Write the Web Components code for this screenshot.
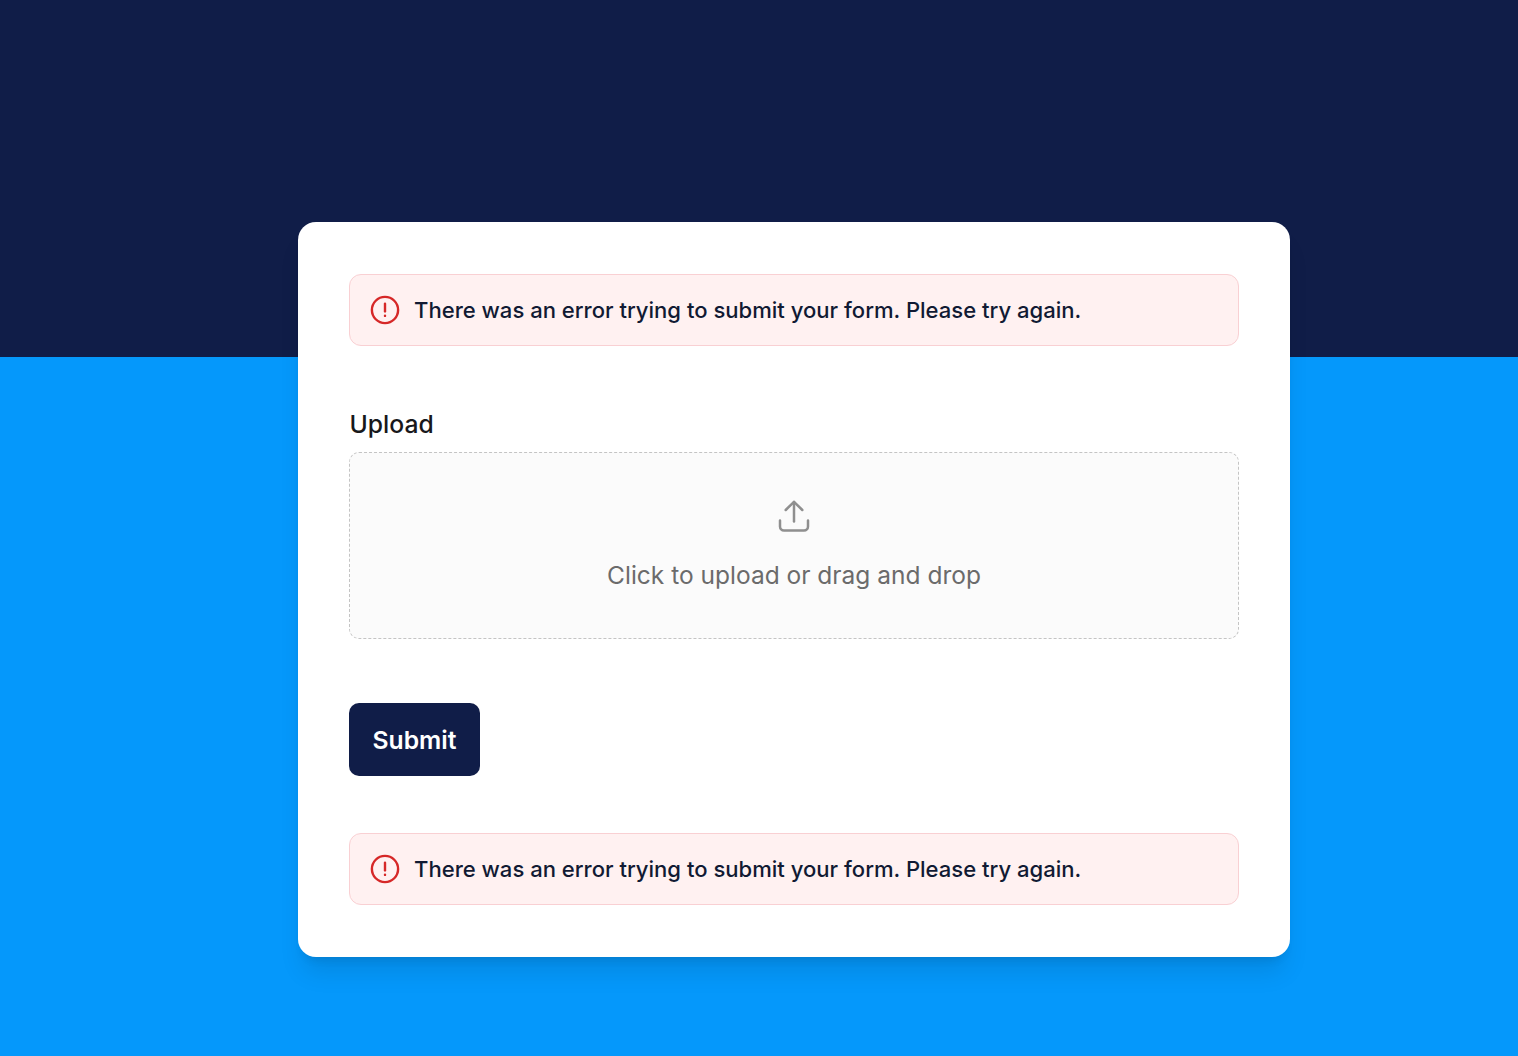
<!DOCTYPE html>
<html>
<head>
<meta charset="utf-8">
<title>Upload form</title>
<style>
    html, body {
        margin: 0;
        padding: 0;
    }
    body {
        font-family: Inter, "Liberation Sans", sans-serif;
    }
</style>
</head>
<body>

<upload-page>
    <form-card>
        <error-alert>There was an error trying to submit your form. Please try again.</error-alert>
        <file-drop label="Upload">Click to upload or drag and drop</file-drop>
        <submit-button>Submit</submit-button>
        <error-alert>There was an error trying to submit your form. Please try again.</error-alert>
    </form-card>
</upload-page>

<script>
class UploadPage extends HTMLElement {
    constructor() {
        super();
        this.attachShadow({mode: 'open'}).innerHTML = `
<style>
    :host {
        display: flex;
        justify-content: center;
        align-items: flex-start;
        box-sizing: border-box;
        height: 1056px;
        padding: 222px 228px 0 298px;
        background: linear-gradient(#101d48 357px, #0598fb 357px);
    }
</style>
<slot></slot>`;
    }
}

class FormCard extends HTMLElement {
    constructor() {
        super();
        this.attachShadow({mode: 'open'}).innerHTML = `
<style>
    :host {
        display: flex;
        flex-direction: column;
        box-sizing: border-box;
        width: 992px;
        height: 735px;
        padding: 52px 51px;
        background: #fff;
        border-radius: 18px;
        box-shadow: 0 20px 25px -5px rgb(0 0 0 / 0.1), 0 8px 10px -6px rgb(0 0 0 / 0.1);
    }
</style>
<slot></slot>`;
    }
}

class ErrorAlert extends HTMLElement {
    constructor() {
        super();
        this.attachShadow({mode: 'open'}).innerHTML = `
<style>
    :host {
        display: flex;
        align-items: center;
        gap: 13px;
        box-sizing: border-box;
        height: 72px;
        padding: 0 19px;
        background: #fff1f1;
        border: 1px solid #f9d0d3;
        border-radius: 12px;
        color: #111a33;
        font-size: 22.07px;
        font-weight: 500;
    }
    svg {
        flex: none;
        width: 32px;
        height: 32px;
    }
</style>
<svg viewBox="0 0 32 32" fill="none" stroke="#d62828" stroke-width="2.4" stroke-linecap="round">
    <circle cx="16" cy="16" r="13.1"/>
    <path d="M16 9.800v7.600"/>
    <path d="M16 21.800v.1"/>
</svg>
<span><slot></slot></span>`;
    }
}

class FileDrop extends HTMLElement {
    constructor() {
        super();
        this.attachShadow({mode: 'open'}).innerHTML = `
<style>
    :host {
        display: flex;
        flex-direction: column;
        margin-top: 62px;
    }
    label {
        padding-left: 0.5px;
        color: #18181b;
        font-size: 24.7px;
        font-weight: 500;
        line-height: 32px;
        margin-bottom: 12px;
    }
    .zone {
        display: flex;
        flex-direction: column;
        align-items: center;
        box-sizing: border-box;
        height: 187px;
        padding-top: 46px;
        background: #fbfbfb;
        border: 1px dashed #c4c4c4;
        border-radius: 10px;
        color: #6b6b6b;
        font-size: 24.5px;
    }
    svg {
        width: 36px;
        height: 36px;
    }
    .text {
        margin-top: 22px;
        line-height: 36px;
    }
</style>
<label></label>
<div class="zone">
    <svg viewBox="0 0 36 36" fill="none" stroke="#8f8f8f" stroke-width="2.5" stroke-linecap="round" stroke-linejoin="round">
        <path d="M18 22.500V3"/>
        <path d="M9.700 11 18 2.800 26.300 11"/>
        <path d="M4 21.500v6A4 4 0 0 0 8 31.500h20a4 4 0 0 0 4-4v-6"/>
    </svg>
    <div class="text"><slot></slot></div>
</div>`;
        this.shadowRoot.querySelector('label').textContent = this.getAttribute('label');
    }
}

class SubmitButton extends HTMLElement {
    constructor() {
        super();
        this.attachShadow({mode: 'open'}).innerHTML = `
<style>
    :host {
        display: block;
        margin-top: 64px;
        margin-bottom: 57px;
    }
    button {
        appearance: none;
        display: block;
        box-sizing: border-box;
        width: 131px;
        height: 73px;
        padding: 0;
        background: #101d48;
        border: none;
        border-radius: 10px;
        color: #fff;
        font-family: inherit;
        font-size: 24.7px;
        font-weight: 600;
    }
</style>
<button type="submit"><slot></slot></button>`;
    }
}

customElements.define('upload-page', UploadPage);
customElements.define('form-card', FormCard);
customElements.define('error-alert', ErrorAlert);
customElements.define('file-drop', FileDrop);
customElements.define('submit-button', SubmitButton);
</script>
</body>
</html>
